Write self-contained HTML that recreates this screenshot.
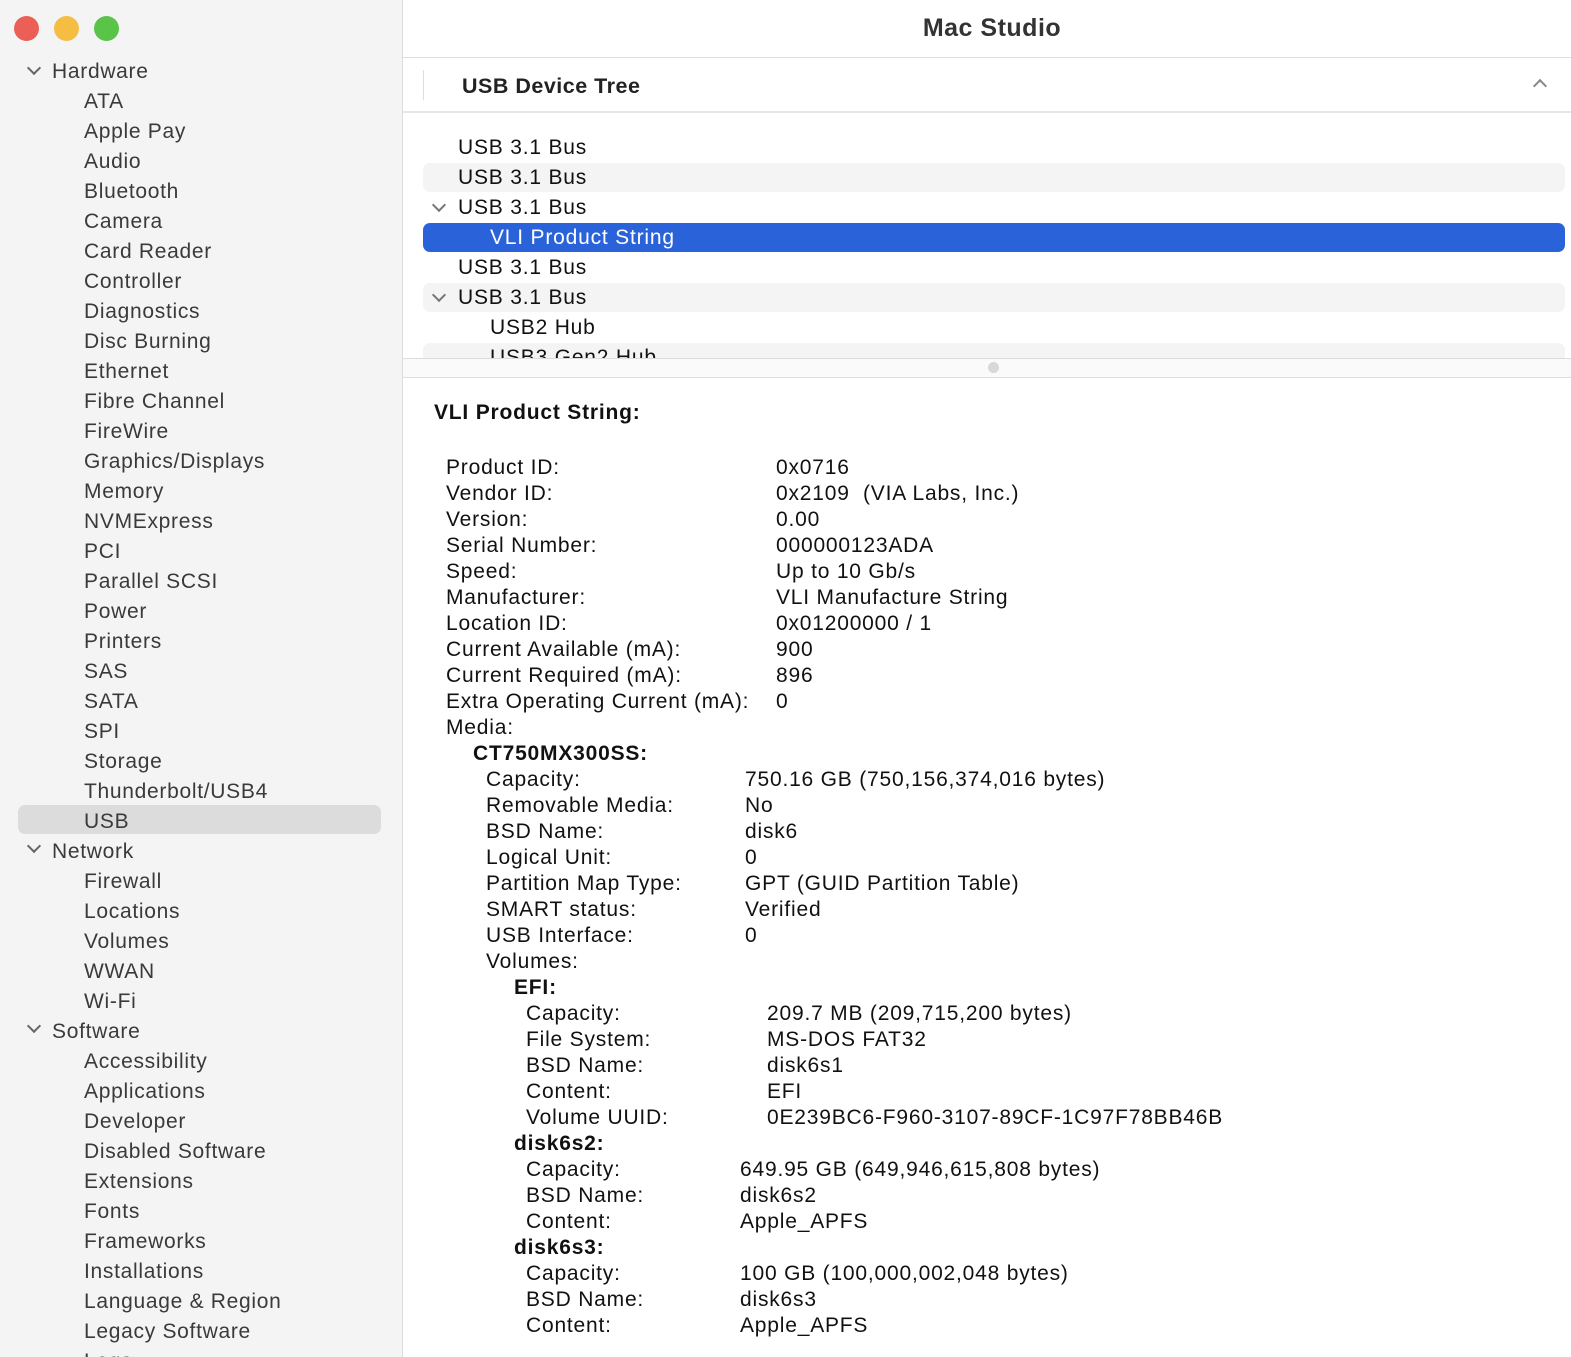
<!DOCTYPE html><html><head><meta charset="utf-8"><style>
*{margin:0;padding:0;box-sizing:border-box}
html,body{width:1571px;height:1357px;overflow:hidden}
body{background:#fff;font-family:"Liberation Sans",sans-serif;position:relative}
.a{position:absolute;white-space:nowrap;line-height:26px}
#side{position:absolute;left:0;top:0;width:403px;height:1357px;background:#f4f4f4;border-right:1px solid #dcdcdc;overflow:hidden}
#side .a{font-size:21px;color:#3a3a3a;line-height:30px;letter-spacing:0.7px}
.dot{position:absolute;top:16px;width:25px;height:25px;border-radius:50%}
.chev{position:absolute;width:10px;height:10px;border-right:2px solid #666;border-bottom:2px solid #666;transform:rotate(45deg)}
.d{font-size:21px;color:#111;letter-spacing:0.8px}
.b{font-weight:bold}
</style></head><body>
<div id="side">
<div class="dot" style="left:14px;background:#ec5f57"></div>
<div class="dot" style="left:54px;background:#f5bd41"></div>
<div class="dot" style="left:94px;background:#5ac449"></div>
<div style="position:absolute;left:18px;top:805px;width:363px;height:29px;background:#dcdcdc;border-radius:7px"></div>
<div class="chev" style="left:29px;top:63px"></div>
<div class="chev" style="left:29px;top:841px"></div>
<div class="chev" style="left:29px;top:1021px"></div>
<div id="sl"></div>
</div>
<div class="a b" style="left:403px;width:1178px;text-align:center;top:12px;font-size:25px;color:#333;line-height:32px;letter-spacing:0.5px">Mac Studio</div>
<div style="position:absolute;left:403px;top:57px;width:1168px;height:1px;background:#ddd"></div>
<div style="position:absolute;left:423px;top:70px;width:1px;height:30px;background:#ddd"></div>
<div class="a b" style="left:462px;top:73px;font-size:21.5px;color:#222;letter-spacing:0.5px">USB Device Tree</div>
<div style="position:absolute;left:1535px;top:81px;width:10px;height:10px;border-left:2px solid #888;border-top:2px solid #888;transform:rotate(45deg)"></div>
<div style="position:absolute;left:403px;top:111px;width:1168px;height:2px;background:#e6e6e6"></div>
<div style="position:absolute;left:403px;top:113px;width:1168px;height:245px;overflow:hidden">
 <div style="position:absolute;left:20px;top:50px;width:1142px;height:29px;background:#f4f4f4;border-radius:7px"></div>
 <div style="position:absolute;left:20px;top:110px;width:1142px;height:29px;background:#2a62d9;border-radius:7px"></div>
 <div style="position:absolute;left:20px;top:170px;width:1142px;height:29px;background:#f4f4f4;border-radius:7px"></div>
 <div style="position:absolute;left:20px;top:230px;width:1142px;height:29px;background:#f4f4f4;border-radius:7px"></div>
 <div class="chev" style="left:31px;top:87px;border-color:#777"></div>
 <div class="chev" style="left:31px;top:177px;border-color:#777"></div>
 <div class="a d" style="left:55px;top:22px">USB 3.1 Bus</div>
 <div class="a d" style="left:55px;top:52px">USB 3.1 Bus</div>
 <div class="a d" style="left:55px;top:82px">USB 3.1 Bus</div>
 <div class="a d" style="left:87px;top:112px;color:#fff">VLI Product String</div>
 <div class="a d" style="left:55px;top:142px">USB 3.1 Bus</div>
 <div class="a d" style="left:55px;top:172px">USB 3.1 Bus</div>
 <div class="a d" style="left:87px;top:202px">USB2 Hub</div>
 <div class="a d" style="left:87px;top:232px">USB3 Gen2 Hub</div>
</div>
<div style="position:absolute;left:403px;top:358px;width:1168px;height:20px;background:#fafafa;border-top:1px solid #ddd;border-bottom:1px solid #ddd"></div>
<div style="position:absolute;left:988px;top:362px;width:11px;height:11px;border-radius:50%;background:#d8d8d8"></div>
<div id="det"></div>
<script>
var s=[["Hardware",52],["ATA"],["Apple Pay"],["Audio"],["Bluetooth"],["Camera"],["Card Reader"],["Controller"],["Diagnostics"],["Disc Burning"],["Ethernet"],["Fibre Channel"],["FireWire"],["Graphics/Displays"],["Memory"],["NVMExpress"],["PCI"],["Parallel SCSI"],["Power"],["Printers"],["SAS"],["SATA"],["SPI"],["Storage"],["Thunderbolt/USB4"],["USB"],["Network",52],["Firewall"],["Locations"],["Volumes"],["WWAN"],["Wi-Fi"],["Software",52],["Accessibility"],["Applications"],["Developer"],["Disabled Software"],["Extensions"],["Fonts"],["Frameworks"],["Installations"],["Language &amp; Region"],["Legacy Software"],["Logs"]];
var h="";s.forEach(function(e,i){h+='<div class="a" style="left:'+(e[1]||84)+'px;top:'+(57+30*i)+'px">'+e[0]+'</div>'});
document.getElementById("sl").innerHTML=h;
var D=[[446,776,"Product ID:","0x0716"],[446,776,"Vendor ID:","0x2109&nbsp; (VIA Labs, Inc.)"],[446,776,"Version:","0.00"],[446,776,"Serial Number:","000000123ADA"],[446,776,"Speed:","Up to 10 Gb/s"],[446,776,"Manufacturer:","VLI Manufacture String"],[446,776,"Location ID:","0x01200000 / 1"],[446,776,"Current Available (mA):","900"],[446,776,"Current Required (mA):","896"],[446,776,"Extra Operating Current (mA):","0"],[446,0,"Media:"],[473,0,"<b>CT750MX300SS:</b>"],[486,745,"Capacity:","750.16 GB (750,156,374,016 bytes)"],[486,745,"Removable Media:","No"],[486,745,"BSD Name:","disk6"],[486,745,"Logical Unit:","0"],[486,745,"Partition Map Type:","GPT (GUID Partition Table)"],[486,745,"SMART status:","Verified"],[486,745,"USB Interface:","0"],[486,0,"Volumes:"],[514,0,"<b>EFI:</b>"],[526,767,"Capacity:","209.7 MB (209,715,200 bytes)"],[526,767,"File System:","MS-DOS FAT32"],[526,767,"BSD Name:","disk6s1"],[526,767,"Content:","EFI"],[526,767,"Volume UUID:","0E239BC6-F960-3107-89CF-1C97F78BB46B"],[514,0,"<b>disk6s2:</b>"],[526,740,"Capacity:","649.95 GB (649,946,615,808 bytes)"],[526,740,"BSD Name:","disk6s2"],[526,740,"Content:","Apple_APFS"],[514,0,"<b>disk6s3:</b>"],[526,740,"Capacity:","100 GB (100,000,002,048 bytes)"],[526,740,"BSD Name:","disk6s3"],[526,740,"Content:","Apple_APFS"]];
h='<div class="a d b" style="left:434px;top:400px">VLI Product String:</div>';
D.forEach(function(e,i){var t=455+26*i;h+='<div class="a d" style="left:'+e[0]+'px;top:'+t+'px">'+e[2]+'</div>';if(e[1])h+='<div class="a d" style="left:'+e[1]+'px;top:'+t+'px">'+e[3]+'</div>';});
document.getElementById("det").innerHTML=h;
</script>
</body></html>
